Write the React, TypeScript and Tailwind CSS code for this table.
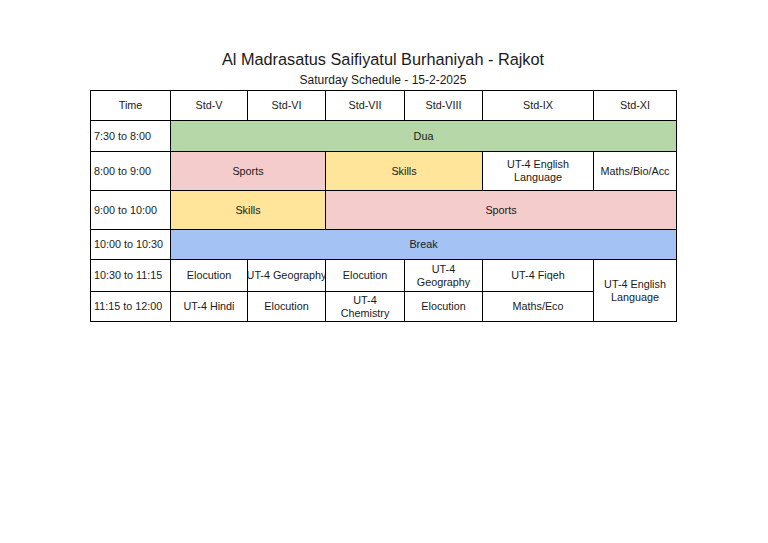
const cell = "border border-black text-center align-middle px-[2px] leading-[13px]";

const green = "bg-[#b6d7a8]";
const pink = "bg-[#f4cccc]";
const yellow = "bg-[#ffe599]";
const blue = "bg-[#a4c2f4]";

function TimeCell({ children }: { children: React.ReactNode }) {
  return <td className="border border-black text-left align-middle pl-[3px] leading-[13px]">{children}</td>;
}

export default function App() {
  return (
    <div className="w-[768px] h-[543px] bg-white text-[#1a1a1a] font-['Liberation_Sans',Arial,sans-serif]">
      <div className="w-[586px] ml-[90px] pt-[49px]">
        <h1 className="text-center text-[16.3px] leading-[20px]">Al Madrasatus Saifiyatul Burhaniyah - Rajkot</h1>
        <p className="text-center text-[12px] leading-[14px] mt-[4px] mb-[3px]">Saturday Schedule - 15-2-2025</p>
        <table className="w-[586px] table-fixed border-collapse text-[10.8px]">
          <colgroup>
            <col className="w-[80px]" />
            <col className="w-[77px]" />
            <col className="w-[78px]" />
            <col className="w-[79px]" />
            <col className="w-[78px]" />
            <col className="w-[111px]" />
            <col className="w-[83px]" />
          </colgroup>
          <tbody>
            <tr className="h-[30px]">
              <td className={cell}>Time</td>
              <td className={cell}>Std-V</td>
              <td className={cell}>Std-VI</td>
              <td className={cell}>Std-VII</td>
              <td className={cell}>Std-VIII</td>
              <td className={cell}>Std-IX</td>
              <td className={cell}>Std-XI</td>
            </tr>
            <tr className="h-[31px]">
              <TimeCell>7:30 to 8:00</TimeCell>
              <td colSpan={6} className={`${cell} ${green}`}>Dua</td>
            </tr>
            <tr className="h-[39px]">
              <TimeCell>8:00 to 9:00</TimeCell>
              <td colSpan={2} className={`${cell} ${pink}`}>Sports</td>
              <td colSpan={2} className={`${cell} ${yellow}`}>Skills</td>
              <td className={cell}>UT-4 English<br />Language</td>
              <td className={cell}>Maths/Bio/Acc</td>
            </tr>
            <tr className="h-[39px]">
              <TimeCell>9:00 to 10:00</TimeCell>
              <td colSpan={2} className={`${cell} ${yellow}`}>Skills</td>
              <td colSpan={4} className={`${cell} ${pink}`}>Sports</td>
            </tr>
            <tr className="h-[30px]">
              <TimeCell>10:00 to 10:30</TimeCell>
              <td colSpan={6} className={`${cell} ${blue}`}>Break</td>
            </tr>
            <tr className="h-[32px]">
              <TimeCell>10:30 to 11:15</TimeCell>
              <td className={cell}>Elocution</td>
              <td className={`${cell} whitespace-nowrap overflow-hidden`}>
                <div className="-mx-[6px]">UT-4 Geography</div>
              </td>
              <td className={cell}>Elocution</td>
              <td className={cell}>UT-4<br />Geography</td>
              <td className={cell}>UT-4 Fiqeh</td>
              <td rowSpan={2} className={cell}>UT-4 English<br />Language</td>
            </tr>
            <tr className="h-[30px]">
              <TimeCell>11:15 to 12:00</TimeCell>
              <td className={cell}>UT-4 Hindi</td>
              <td className={cell}>Elocution</td>
              <td className={cell}>UT-4<br />Chemistry</td>
              <td className={cell}>Elocution</td>
              <td className={cell}>Maths/Eco</td>
            </tr>
          </tbody>
        </table>
      </div>
    </div>
  );
}
